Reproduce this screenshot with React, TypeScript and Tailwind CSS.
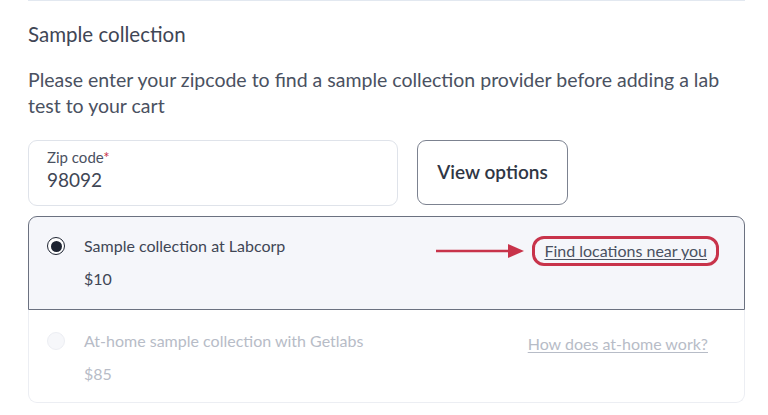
import React from 'react';

const font = { fontFamily: '"Lato", "Noto Sans", sans-serif' };

function Radio({ disabled }: { disabled?: boolean }) {
  if (disabled) {
    return <span className="w-[18px] h-[18px] rounded-full border border-[#eceef3] bg-[#f6f7fa] shrink-0" />;
  }
  return (
    <span className="w-[18px] h-[18px] rounded-full border-[1.5px] border-[#1f2532] bg-white flex items-center justify-center shrink-0">
      <span className="w-[11px] h-[11px] rounded-full bg-[#1f2532]" />
    </span>
  );
}

export default function App() {
  return (
    <div className="w-[768px] h-[415px] bg-white overflow-hidden" style={font}>
      <div className="ml-[28px] mr-[23px] border-t border-[#e2e8f0]">
        <h2 className="mt-[19px] text-[20.5px] leading-[28px] text-[#3f4655]">Sample collection</h2>
        <p className="mt-[19px] text-[19.5px] leading-[26px] text-[#4a5161] pr-[10px]">
          Please enter your zipcode to find a sample collection provider before adding a lab test to your cart
        </p>

        <div className="mt-[21px] flex gap-[19px]">
          <div className="w-[370px] h-[66px] rounded-[9px] border border-[#dfe3ea] px-[18px] pt-[7px]">
            <div className="text-[15px] leading-[18px] text-[#4a5161]">
              Zip code<span className="text-[#c8334a]">*</span>
            </div>
            <div className="text-[19px] leading-[24px] text-[#3f4655] mt-[2px]">98092</div>
          </div>
          <button className="w-[151px] h-[65px] rounded-[9px] border border-[#7c8290] text-[19px] font-semibold text-[#2f3644]">
            View options
          </button>
        </div>

        <div className="mt-[10px]">
          <div className="h-[94px] rounded-t-[9px] border border-[#6b7180] bg-[#f5f6fa] pl-[18px] pr-[25px] pt-[19px] flex items-start">
            <div>
              <div className="flex items-center">
                <Radio />
                <span className="ml-[19px] text-[16px] leading-[20px] text-[#3f4655]">Sample collection at Labcorp</span>
              </div>
              <div className="mt-[13px] ml-[37px] text-[16px] leading-[20px] text-[#3f4655]">$10</div>
            </div>
            <div className="ml-auto flex items-center">
              <svg width="88" height="14" viewBox="0 0 88 14" className="mr-[8px]">
                <line x1="0" y1="7" x2="74" y2="7" stroke="#c8334a" strokeWidth="2.5" />
                <polygon points="72,0 88,7 72,14" fill="#c8334a" />
              </svg>
              <span className="rounded-[12px] border-[3px] border-[#c8334a] px-[9px] py-[2px] text-[16px] leading-[20px] text-[#4a5161] underline underline-offset-2">
                Find locations near you
              </span>
            </div>
          </div>
          <div className="h-[93px] rounded-b-[9px] border border-t-0 border-[#eceef3] pl-[18px] pr-[36px] pt-[21px] flex items-start">
            <div>
              <div className="flex items-center">
                <Radio disabled />
                <span className="ml-[19px] text-[16px] leading-[20px] text-[#b7bcc7]">At-home sample collection with Getlabs</span>
              </div>
              <div className="mt-[13px] ml-[37px] text-[16px] leading-[20px] text-[#b7bcc7]">$85</div>
            </div>
            <span className="ml-auto mt-[3px] text-[16px] leading-[20px] text-[#b7bcc7] underline underline-offset-2">
              How does at-home work?
            </span>
          </div>
        </div>
      </div>
    </div>
  );
}
